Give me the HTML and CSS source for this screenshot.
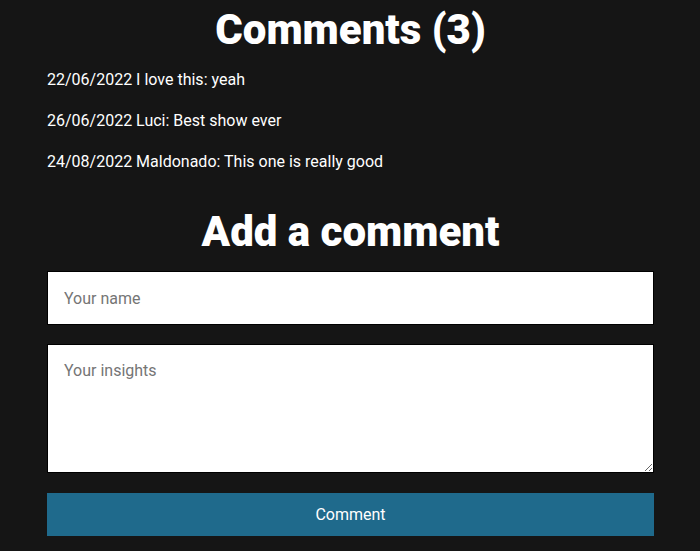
FILE: index.html
```html
<!DOCTYPE html>
<html lang="en">
<head>
<meta charset="utf-8">
<title>Comments</title>
<link rel="stylesheet" href="styles.css">
</head>
<body>
<main class="page">
  <h1 class="title title-main">Comments (3)</h1>
  <ul class="comments">
    <li class="comment">22/06/2022 I love this: yeah</li>
    <li class="comment">26/06/2022 Luci: Best show ever</li>
    <li class="comment">24/08/2022 Maldonado: This one is really good</li>
  </ul>
  <h2 class="title title-add">Add a comment</h2>
  <form class="form">
    <input class="field" type="text" placeholder="Your name">
    <textarea class="field field-area" placeholder="Your insights"></textarea>
    <button class="btn" type="button">Comment</button>
  </form>
</main>
</body>
</html>
```

FILE: styles.css
```css
html, body {
  margin: 0;
  padding: 0;
  background: #151515;
}
body {
  font-family: Roboto, "Liberation Sans", sans-serif;
  color: #fff;
}
.page {
  padding: 0 46px 0 47px;
}
.title {
  margin: 0;
  text-align: center;
  font-size: 42px;
  font-weight: 900;
  line-height: 56px;
}
.title-main {
  padding-top: 2px;
}
.comments {
  list-style: none;
  margin: 9px 0 0;
  padding: 0;
  display: flex;
  flex-direction: column;
  gap: 16px;
}
.comment {
  font-size: 16px;
  line-height: 25px;
}
.title-add {
  margin-top: 30px;
  margin-bottom: 11px;
}
.form {
  display: flex;
  flex-direction: column;
  gap: 19px;
}
.field {
  box-sizing: border-box;
  width: 100%;
  height: 54px;
  border: 1px solid #000;
  background: #fff;
  padding: 0 16px;
  font-family: Roboto, "Liberation Sans", sans-serif;
  font-size: 16px;
  color: #222;
  margin: 0;
  display: block;
  border-radius: 0;
}
.field::placeholder {
  color: #757575;
}
.field-area {
  height: 129px;
  padding: 16px;
  resize: vertical;
}
.btn {
  height: 43px;
  border: none;
  background: #1f6a8c;
  color: #fff;
  font-family: Roboto, "Liberation Sans", sans-serif;
  font-size: 16px;
  margin-top: 1px;
}
```
